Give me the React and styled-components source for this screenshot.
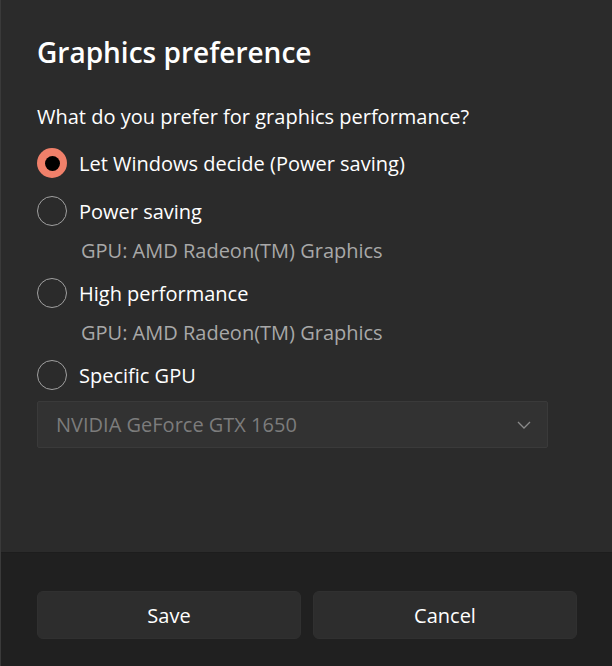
import React from "react";
import styled, { createGlobalStyle } from "styled-components";

const Global = createGlobalStyle`
  html, body { margin: 0; padding: 0; background: #2b2b2b; }
  body { font-family: "Segoe UI", "Open Sans", "Noto Sans", sans-serif; }
  * { box-sizing: border-box; }
`;

const Dialog = styled.div`
  width: 612px;
  height: 666px;
  display: flex;
  flex-direction: column;
  background: #2b2b2b;
  border-left: 1px solid #3a3a3a;
  color: #ffffff;
`;

const Body = styled.div`
  flex: 1;
  padding: 30px 36px 0 36px;
  display: flex;
  flex-direction: column;
`;

const Title = styled.h1`
  margin: 0;
  font-size: 28px;
  font-weight: 600;
  line-height: 44px;
  letter-spacing: 0;
`;

const Prompt = styled.p`
  margin: 29px 0 0 0;
  font-size: 20px;
  line-height: 28px;
  color: #ffffff;
`;

const Options = styled.div`
  display: flex;
  flex-direction: column;
  margin-top: 17px;
`;

const Row = styled.label`
  display: flex;
  align-items: center;
  gap: 12px;
  height: 30px;
  margin-top: ${(p) => p.$gap}px;
  font-size: 20px;
  cursor: pointer;
`;

const Radio = styled.span`
  width: 30px;
  height: 30px;
  border-radius: 50%;
  flex: none;
  display: flex;
  align-items: center;
  justify-content: center;
  border: ${(p) => (p.$checked ? "none" : "1.5px solid #a0a0a0")};
  background: ${(p) => (p.$checked ? "#f0806a" : "transparent")};
  &::after {
    content: "";
    display: ${(p) => (p.$checked ? "block" : "none")};
    width: 15px;
    height: 15px;
    border-radius: 50%;
    background: #000;
  }
`;

const Sub = styled.div`
  margin: 11px 0 0 44px;
  height: 28px;
  line-height: 28px;
  font-size: 20px;
  color: #a8a8a8;
`;

const Select = styled.div`
  margin-top: 11px;
  width: 511px;
  height: 47px;
  display: flex;
  align-items: center;
  justify-content: space-between;
  padding: 0 16px 0 18px;
  background: #323232;
  border: 1px solid #3a3a3a;
  border-radius: 2px;
  color: #7c7c7c;
  font-size: 20px;
`;

const Footer = styled.div`
  height: 114px;
  flex: none;
  background: #202020;
  border-top: 1px solid #1d1d1d;
  display: flex;
  align-items: flex-start;
  gap: 12px;
  padding: 38px 35px 0 36px;
`;

const Button = styled.button`
  flex: 1;
  height: 48px;
  background: #2d2d2d;
  border: 1px solid #303030;
  border-radius: 6px;
  color: #ffffff;
  font-family: inherit;
  font-size: 20px;
`;

const options = [
  { label: "Let Windows decide (Power saving)", checked: true, gap: 0 },
  { label: "Power saving", sub: "GPU: AMD Radeon(TM) Graphics", gap: 18 },
  { label: "High performance", sub: "GPU: AMD Radeon(TM) Graphics", gap: 13 },
  { label: "Specific GPU", gap: 13 },
];

export default function App() {
  return (
    <>
      <Global />
      <Dialog>
        <Body>
          <Title>Graphics preference</Title>
          <Prompt>What do you prefer for graphics performance?</Prompt>
          <Options>
            {options.map((o) => (
              <React.Fragment key={o.label}>
                <Row $gap={o.gap}>
                  <Radio $checked={o.checked} />
                  {o.label}
                </Row>
                {o.sub && <Sub>{o.sub}</Sub>}
              </React.Fragment>
            ))}
          </Options>
          <Select>
            NVIDIA GeForce GTX 1650
            <svg width="14" height="8" viewBox="0 0 14 8" fill="none">
              <path d="M1 1l6 6 6-6" stroke="#8a8a8a" strokeWidth="1.3" />
            </svg>
          </Select>
        </Body>
        <Footer>
          <Button>Save</Button>
          <Button>Cancel</Button>
        </Footer>
      </Dialog>
    </>
  );
}
